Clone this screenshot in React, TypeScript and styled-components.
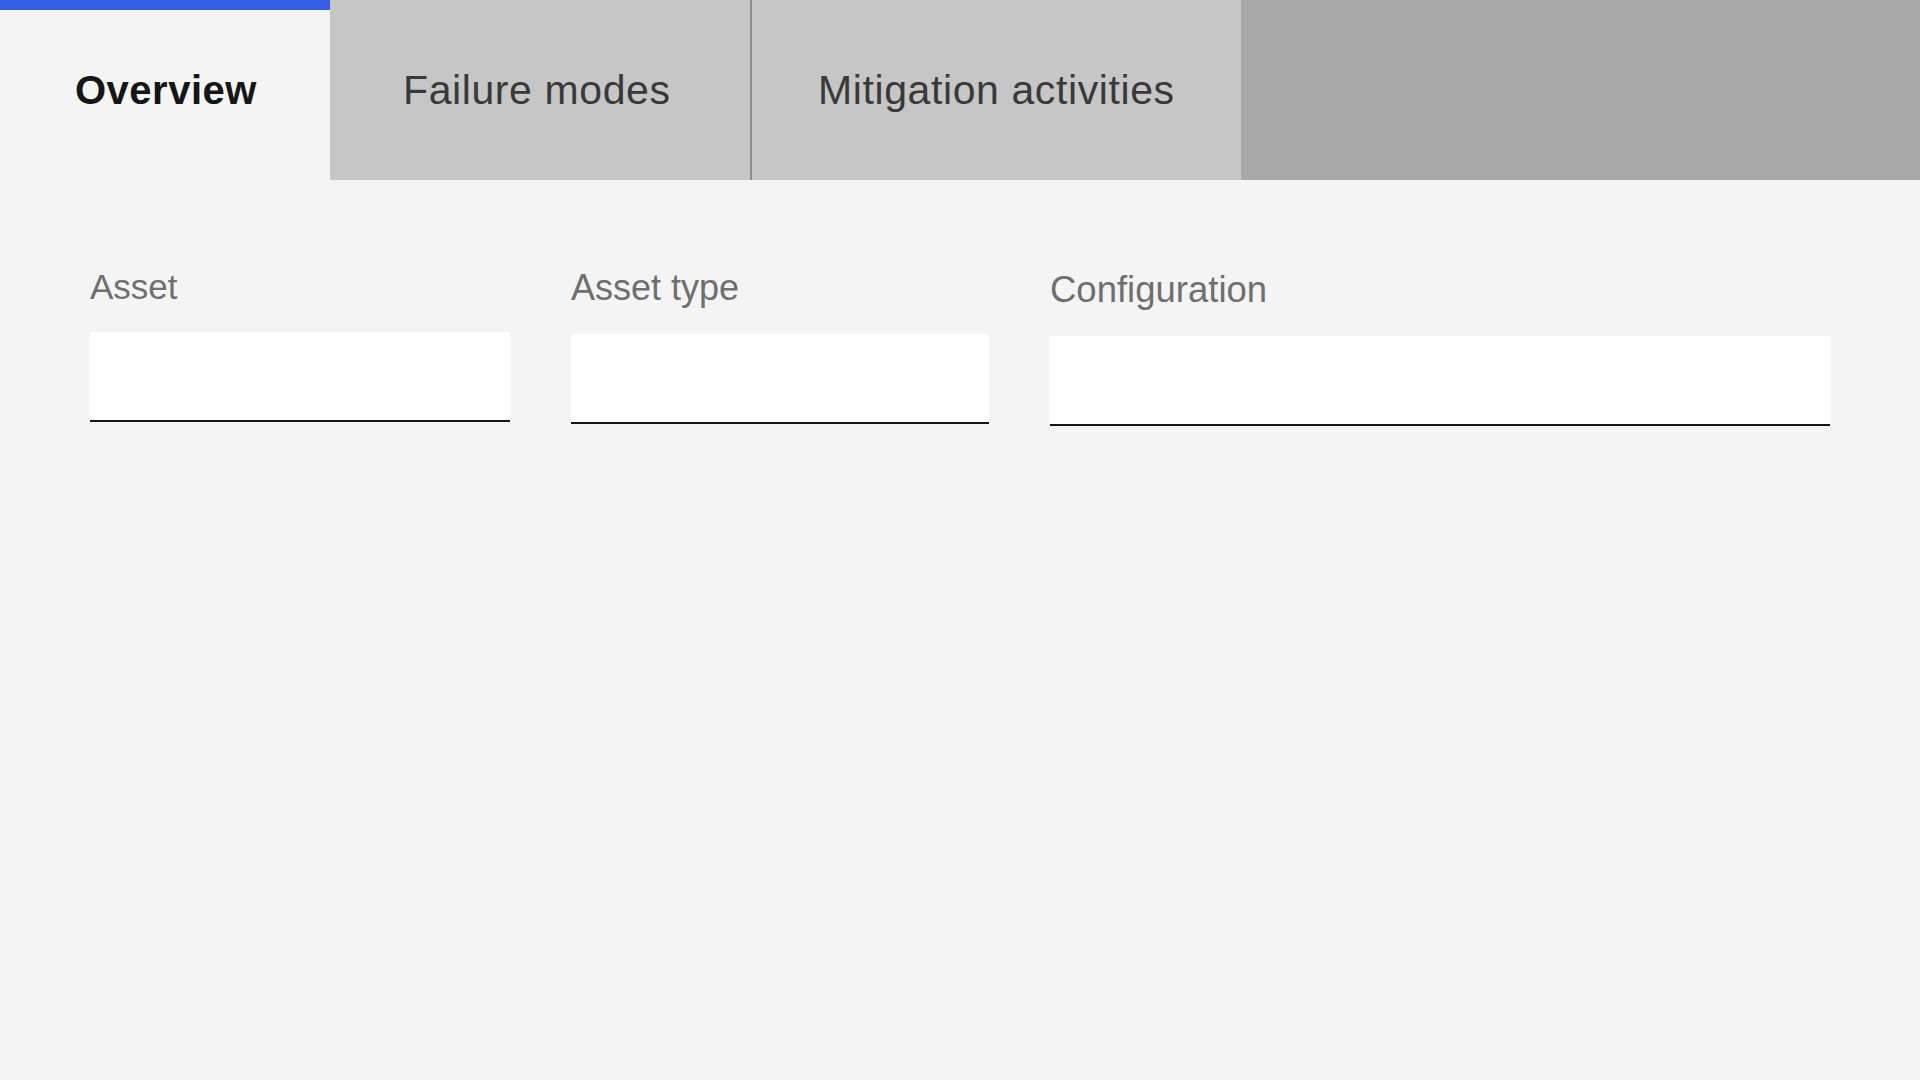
import React from "react";
import styled, { createGlobalStyle } from "styled-components";

const GlobalStyle = createGlobalStyle`
  html, body {
    margin: 0;
    padding: 0;
    background: #f4f4f4;
    font-family: "Liberation Sans", Arial, sans-serif;
  }
  * { box-sizing: border-box; }
`;

const Page = styled.div`
  width: 1920px;
  min-height: 1080px;
  background: #f4f4f4;
  display: flex;
  flex-direction: column;
`;

const TabBar = styled.nav`
  display: flex;
  height: 180px;
  background: #a8a8a8;
`;

const Tab = styled.button<{ $width: number; $padLeft: number; $selected?: boolean; $divider?: boolean }>`
  width: ${(p) => p.$width}px;
  height: 180px;
  padding: 0 0 0 ${(p) => p.$padLeft}px;
  margin: 0;
  border: none;
  border-right: ${(p) => (p.$divider ? "2px solid #8d8d8d" : "none")};
  background: ${(p) => (p.$selected ? "#f4f4f4" : "#c6c6c6")};
  box-shadow: ${(p) => (p.$selected ? "inset 0 10px 0 #335fe9" : "none")};
  display: flex;
  align-items: center;
  justify-content: flex-start;
  font-family: "Liberation Sans", Arial, sans-serif;
  font-size: ${(p) => (p.$selected ? 40 : 41)}px;
  letter-spacing: ${(p) => (p.$selected ? 0.5 : 0.6)}px;
  line-height: 1;
  font-weight: ${(p) => (p.$selected ? 700 : 400)};
  color: ${(p) => (p.$selected ? "#161616" : "#393939")};
  white-space: nowrap;
  cursor: pointer;
`;

const Form = styled.section`
  display: grid;
  grid-template-columns: 420px 418px 1fr;
  column-gap: 61px;
  align-items: start;
  padding: 89px 90px 0 90px;
`;

const Field = styled.label<{ $offset: number }>`
  display: flex;
  flex-direction: column;
  margin-top: ${(p) => p.$offset}px;
`;

const LabelText = styled.span<{ $size: number; $gap: number }>`
  font-size: ${(p) => p.$size}px;
  line-height: ${(p) => p.$size}px;
  color: #6f6f6f;
  margin-bottom: ${(p) => p.$gap}px;
  white-space: nowrap;
`;

const Input = styled.input`
  height: 90px;
  width: 100%;
  border: none;
  border-bottom: 2px solid #161616;
  background: #ffffff;
  outline: none;
  padding: 0 20px;
  font-family: "Liberation Sans", Arial, sans-serif;
  font-size: 32px;
  color: #161616;
`;

const tabs = [
  { label: "Overview", width: 330, padLeft: 75, selected: true },
  { label: "Failure modes", width: 422, padLeft: 73, divider: true },
  { label: "Mitigation activities", width: 489, padLeft: 66 },
];

const fields = [
  { label: "Asset", size: 35, offset: 0, gap: 28 },
  { label: "Asset type", size: 36, offset: 1, gap: 27.5 },
  { label: "Configuration", size: 36.5, offset: 2.5, gap: 28 },
];

export default function App() {
  return (
    <>
      <GlobalStyle />
      <Page>
        <TabBar>
          {tabs.map((t) => (
            <Tab
              key={t.label}
              $width={t.width}
              $padLeft={t.padLeft}
              $selected={t.selected}
              $divider={t.divider}
            >
              {t.label}
            </Tab>
          ))}
        </TabBar>
        <Form>
          {fields.map((f) => (
            <Field key={f.label} $offset={f.offset}>
              <LabelText $size={f.size} $gap={f.gap}>
                {f.label}
              </LabelText>
              <Input type="text" />
            </Field>
          ))}
        </Form>
      </Page>
    </>
  );
}
